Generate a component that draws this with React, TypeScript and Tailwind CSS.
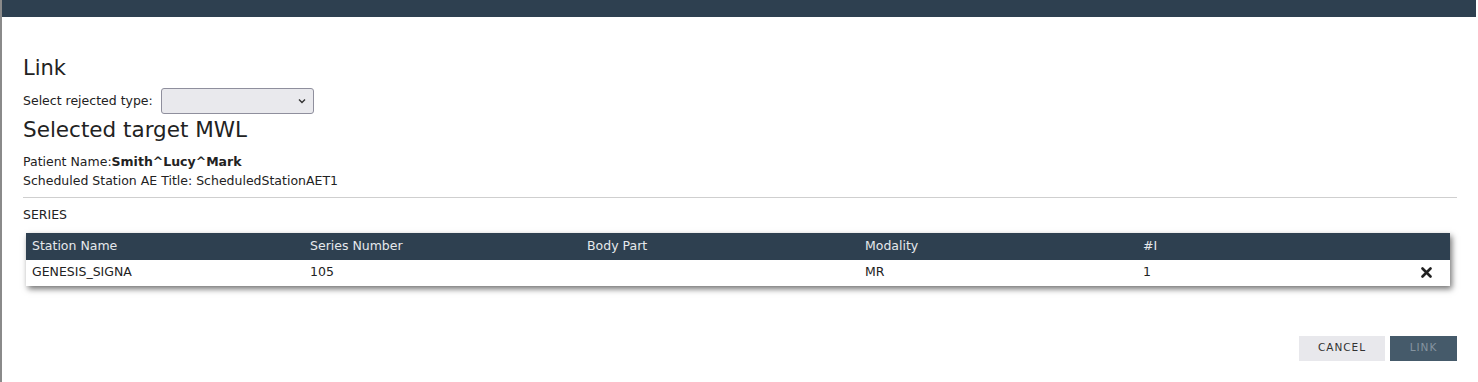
const columns = ["Station Name", "Series Number", "Body Part", "Modality", "#I"];
const rows = [["GENESIS_SIGNA", "105", "", "MR", "1"]];

export default function App() {
  return (
    <div
      className="h-[382px] w-[1478px] bg-white text-[#222] border-l-2 border-[#8a8a8a] overflow-hidden"
      style={{ fontFamily: '"DejaVu Sans", sans-serif' }}
    >
      <div className="mr-[2px] h-[17px] bg-[#2e4050]" />
      <div className="pl-[21px] pr-[21px] pt-[38px]">
        <h2 className="text-[21px] leading-[26px]">Link</h2>
        <div className="mt-[7px] flex items-center gap-[8px] text-[12.5px]">
          <span>Select rejected type:</span>
          <div className="relative h-[26px] w-[153px] rounded-[3px] border border-[#8f8f9d] bg-[#e9e9ed]">
            <svg
              className="absolute right-[7px] top-[9px]"
              width="8"
              height="6"
              viewBox="0 0 8 6"
              fill="none"
              stroke="#333"
              strokeWidth="1.4"
            >
              <path d="M1 1.5 4 4.5 7 1.5" />
            </svg>
          </div>
        </div>
        <h2 className="mt-[2px] text-[21.5px] leading-[28px]">Selected target MWL</h2>
        <div className="mt-[8px] text-[12.5px] leading-[19px]">
          <div>
            Patient Name:<b>Smith^Lucy^Mark</b>
          </div>
          <div>Scheduled Station AE Title: ScheduledStationAET1</div>
        </div>
        <hr className="mt-[7px] border-t border-[#cfcfcf]" />
        <div className="mt-[8px] text-[12.5px]">SERIES</div>
        <div className="ml-[3px] mr-[7px] mt-[8px] shadow-[2px_3px_6px_rgba(0,0,0,0.55)]">
          <div className="grid h-[27px] grid-cols-[278px_277px_278px_278px_1fr] items-center bg-[#2e4050] pl-[6px] text-[12.5px] text-[#e6e9ec]">
            {columns.map((c) => (
              <span key={c}>{c}</span>
            ))}
          </div>
          {rows.map((r, i) => (
            <div
              key={i}
              className="grid h-[26px] grid-cols-[278px_277px_278px_278px_1fr] items-center bg-white pl-[6px] text-[12.5px]"
            >
              {r.slice(0, 4).map((v, j) => (
                <span key={j}>{v}</span>
              ))}
              <div className="flex items-center justify-between pr-[18px]">
                <span>{r[4]}</span>
                <svg width="11" height="11" viewBox="0 0 11 11">
                  <path
                    d="M1.5 1.5 9.5 9.5M9.5 1.5 1.5 9.5"
                    stroke="#222"
                    strokeWidth="2.6"
                    strokeLinecap="round"
                  />
                </svg>
              </div>
            </div>
          ))}
        </div>
        <div className="flex justify-end gap-[5px] pt-[50px]">
          <button className="h-[25px] w-[86px] bg-[#e8e8ec] text-[10.5px] tracking-[1px] text-[#333]">
            CANCEL
          </button>
          <button className="h-[25px] w-[67px] bg-[#455a6a] text-[10.5px] tracking-[1px] text-[#8594a0]">
            LINK
          </button>
        </div>
      </div>
    </div>
  );
}
